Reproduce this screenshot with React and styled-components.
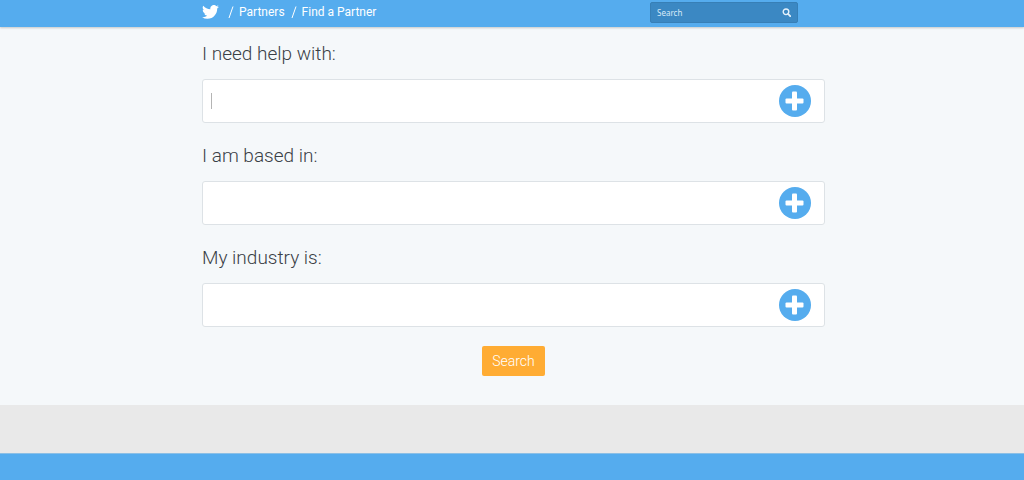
import React, { useState } from 'react';
import styled, { createGlobalStyle, css } from 'styled-components';

const theme = {
  blue: '#55acee',
  darkBlue: '#3b88c3',
  orange: '#ffac33',
  pale: '#f5f8fa',
  grey: '#e9e9e9',
  border: '#dde2e6',
  text: '#3a4046',
  font: 'Roboto, "Open Sans", sans-serif',
};

const GlobalStyle = createGlobalStyle`
  * {
    box-sizing: border-box;
  }
  body {
    margin: 0;
    background: ${theme.blue};
    color: ${theme.text};
    font-family: ${theme.font};
  }
`;

const container = css`
  width: 100%;
  max-width: 626px;
  margin: 0 auto;
  padding-left: 3px;
`;

const Header = styled.header`
  position: relative;
  background: ${theme.blue};
  box-shadow: 0 1px 2px rgba(0, 0, 0, 0.2);
`;
const HeaderInner = styled.div`
  ${container};
  display: flex;
  align-items: center;
  justify-content: space-between;
  height: 27px;
  padding-right: 27px;
  padding-bottom: 3px;
`;
const Breadcrumbs = styled.nav`
  display: flex;
  align-items: center;
  color: #fff;
  font-size: 12px;
  line-height: 20px;
`;
const Crumb = styled.a`
  color: #fff;
  text-decoration: none;
`;
const HomeLink = styled(Crumb)`
  display: flex;
  margin-right: 9px;
`;
const Slash = styled.svg`
  width: 6px;
  height: 14px;
  margin-right: 5px;

  ${Crumb} + & {
    margin-left: 6px;
  }
  ${HomeLink} + & {
    margin-left: 0;
  }
`;
const SiteSearch = styled.form`
  display: flex;
  align-items: center;
  width: 148px;
  height: 21px;
  padding: 0 6px;
  border: 1px solid #377fb6;
  border-radius: 2px;
  background: ${theme.darkBlue};
`;
const SiteSearchInput = styled.input`
  flex: 1;
  min-width: 0;
  padding: 0;
  border: 0;
  outline: 0;
  background: transparent;
  color: #fff;
  font: 8px 'Noto Sans', sans-serif;

  &::placeholder {
    color: #d8eaf8;
    opacity: 1;
  }
`;
const IconButton = styled.button`
  display: flex;
  padding: 0;
  border: 0;
  background: transparent;
  cursor: pointer;
`;

const Main = styled.main`
  background: ${theme.pale};
`;
const PartnerForm = styled.form`
  ${container};
  display: flex;
  flex-direction: column;
  gap: 19px;
  padding-top: 12px;
  padding-bottom: 29px;
`;
const Field = styled.div`
  display: flex;
  flex-direction: column;
  gap: 10px;
`;
const Label = styled.label`
  font-size: 19px;
  font-weight: 300;
  line-height: 30px;
`;
const FieldBox = styled.div`
  display: flex;
  align-items: center;
  height: 44px;
  padding: 0 13px 0 8px;
  border: 1px solid ${theme.border};
  border-radius: 3px;
  background: #fff;
`;
const Caret = styled.span`
  width: 1px;
  height: 16px;
  background: #b4b4b4;
`;
const FieldInput = styled.input`
  flex: 1;
  min-width: 0;
  height: 32px;
  padding: 0;
  border: 0;
  outline: 0;
  background: transparent;
  color: ${theme.text};
  font: 16px ${theme.font};
`;
const Fields = styled.div`
  display: flex;
  flex-direction: column;
  gap: 18px;
`;
const SubmitButton = styled.button`
  align-self: center;
  height: 30px;
  padding: 0 10px;
  border: 0;
  border-radius: 2px;
  background: ${theme.orange};
  color: #fff;
  font: 300 14px ${theme.font};
  cursor: pointer;
`;

const GreyBand = styled.div`
  height: 48px;
  background: ${theme.grey};
`;
const Footer = styled.footer`
  min-height: 27px;
  border-top: 1px solid #8bbfe6;
  background: ${theme.blue};
`;

const BirdIcon = () => (
  <svg width="17" height="14" viewBox="0 0 24 20" fill="#fff" aria-hidden="true">
    <path d="M24 2.37a9.8 9.8 0 0 1-2.83.77A4.93 4.93 0 0 0 23.34.42a9.86 9.86 0 0 1-3.13 1.19A4.92 4.92 0 0 0 11.83 6.1 13.98 13.98 0 0 1 1.67.95a4.93 4.93 0 0 0 1.52 6.57 4.9 4.9 0 0 1-2.23-.61v.06a4.92 4.92 0 0 0 3.95 4.83 4.9 4.9 0 0 1-2.22.08 4.93 4.93 0 0 0 4.6 3.42A9.87 9.87 0 0 1 0 17.34a13.93 13.93 0 0 0 7.55 2.21c9.05 0 14-7.5 14-14v-.63A10 10 0 0 0 24 2.37z" />
  </svg>
);

const SlashMark = () => (
  <Slash viewBox="0 0 6 14" aria-hidden="true">
    <path d="M5 1.5 1 13" stroke="#fff" fill="none" />
  </Slash>
);

const SearchIcon = () => (
  <svg width="9" height="9" viewBox="0 0 9 9" fill="none" stroke="#e4f1fb" aria-hidden="true">
    <circle cx="4" cy="3.8" r="2.8" strokeWidth="1.4" />
    <path d="m6.2 6 2 2.2" strokeWidth="1.8" strokeLinecap="round" />
  </svg>
);

const PlusIcon = () => (
  <svg width="32" height="32" viewBox="0 0 32 32" aria-hidden="true">
    <circle cx="16" cy="16" r="16" fill={theme.blue} />
    <rect x="13" y="6.5" width="5" height="19" rx="1" fill="#fff" />
    <rect x="6.5" y="13.5" width="18" height="5" rx="1" fill="#fff" />
  </svg>
);

const fields = [
  { id: 'help', label: 'I need help with:' },
  { id: 'location', label: 'I am based in:' },
  { id: 'industry', label: 'My industry is:' },
];

const App = () => {
  const [values, setValues] = useState({ help: '', location: '', industry: '' });
  const onSubmit = e => e.preventDefault();

  return (
    <>
      <GlobalStyle />
      <Header>
        <HeaderInner>
          <Breadcrumbs>
            <HomeLink href="#home" aria-label="Twitter">
              <BirdIcon />
            </HomeLink>
            <SlashMark />
            <Crumb href="#partners">Partners</Crumb>
            <SlashMark />
            <Crumb href="#find">Find a Partner</Crumb>
          </Breadcrumbs>
          <SiteSearch onSubmit={onSubmit}>
            <SiteSearchInput type="text" placeholder="Search" aria-label="Search" />
            <IconButton type="submit" aria-label="Search">
              <SearchIcon />
            </IconButton>
          </SiteSearch>
        </HeaderInner>
      </Header>
      <Main>
        <PartnerForm onSubmit={onSubmit}>
          <Fields>
            {fields.map(({ id, label }, i) => (
              <Field key={id}>
                <Label htmlFor={id}>{label}</Label>
                <FieldBox>
                  {i === 0 && !values[id] && <Caret />}
                  <FieldInput
                    id={id}
                    type="text"
                    value={values[id]}
                    onChange={e => setValues({ ...values, [id]: e.target.value })}
                  />
                  <IconButton type="button" aria-label={`Add to ${label}`}>
                    <PlusIcon />
                  </IconButton>
                </FieldBox>
              </Field>
            ))}
          </Fields>
          <SubmitButton type="submit">Search</SubmitButton>
        </PartnerForm>
      </Main>
      <GreyBand />
      <Footer />
    </>
  );
};

export default App;
